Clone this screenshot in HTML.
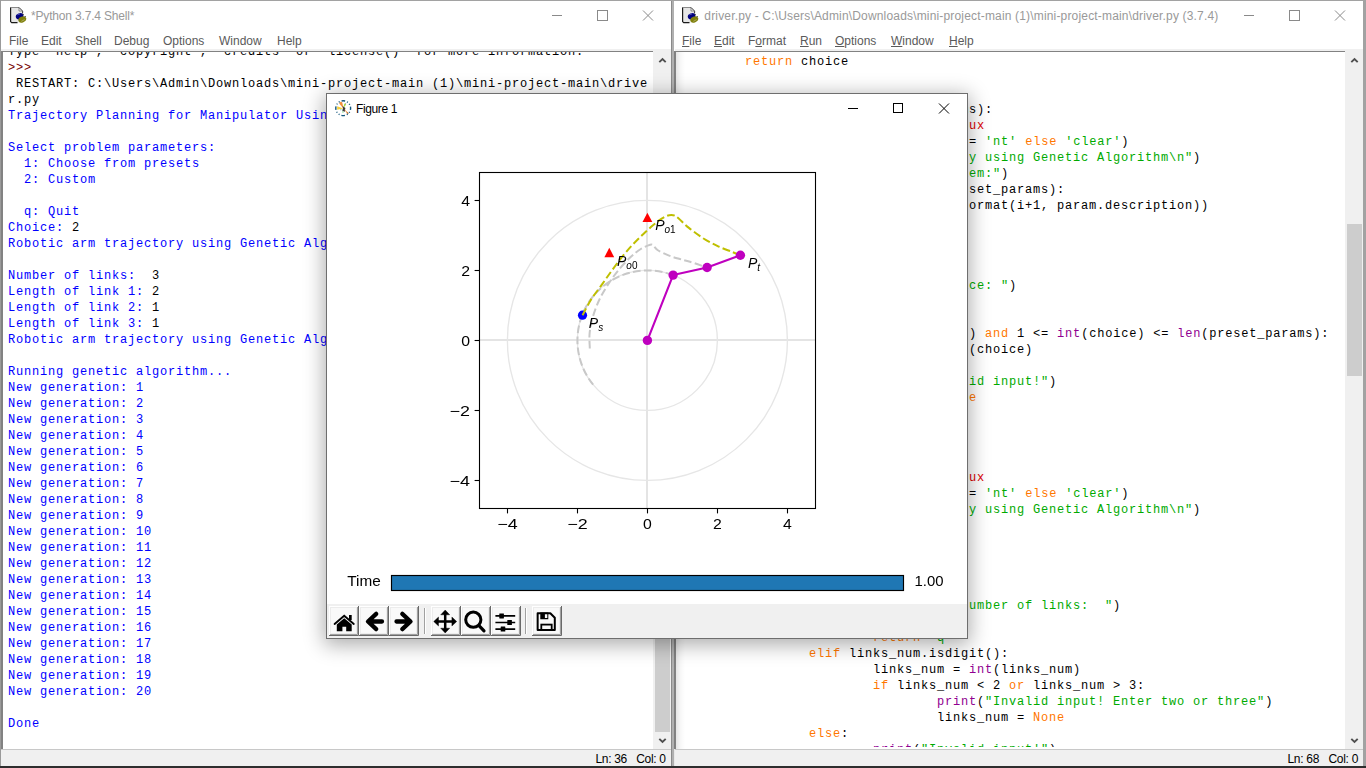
<!DOCTYPE html>
<html><head><meta charset="utf-8"><title>screen</title>
<style>
*{box-sizing:border-box;margin:0;padding:0}
html,body{width:1366px;height:768px;overflow:hidden;background:#b0b0b0;font-family:"Liberation Sans",sans-serif;}
.abs{position:absolute}
.win{position:absolute;background:#fff;overflow:hidden}
.title{position:absolute;left:0;top:0;right:0;height:30px;background:#fff}
.ttext{position:absolute;top:8px;font-size:12px;line-height:14px;color:#999;white-space:nowrap;transform-origin:0 0}
.menu{position:absolute;left:0;right:0;top:30px;height:20px;background:#fff;font-size:12px;line-height:14px;color:#5a5a5a}
.menu span{position:absolute;top:3px;white-space:nowrap}
.menu u{text-decoration:underline;text-underline-offset:1px}
.txt{position:absolute;background:#fff;overflow:hidden;font-family:"Liberation Mono",monospace;font-size:12px;letter-spacing:0.8px;line-height:16px}
.ln{height:16px;white-space:pre}
.sb{position:absolute;background:#f0f0f0}
.thumb{position:absolute;left:0;right:0;background:#cdcdcd}
.status{position:absolute;left:0;right:0;height:17px;background:#f0f0f0;font-size:12px;line-height:14px;color:#000}
.status span{position:absolute;top:2px;white-space:nowrap}
.ctl{position:absolute}
</style></head><body>
<!-- desktop strips -->
<div class="abs" style="left:0;top:0;width:1366px;height:1px;background:#a2a2a2"></div>
<div class="abs" style="left:0;top:0;width:1px;height:766px;background:#9a9a9a"></div>
<div class="abs" style="left:671px;top:1px;width:1px;height:765px;background:#8a8a8a"></div>
<div class="abs" style="left:674px;top:1px;width:1px;height:50px;background:#fff"></div>
<div class="abs" style="left:674px;top:51px;width:1px;height:698px;background:#808080"></div>
<div class="abs" style="left:674px;top:749px;width:1px;height:17px;background:#e8e8e8"></div>
<div class="abs" style="left:1363px;top:1px;width:3px;height:765px;background:#a2a2a2"></div>
<!-- bottom dark strip -->
<div class="abs" style="left:0;top:766px;width:1366px;height:2px;background:#2e2e2e"></div>

<!-- ================= LEFT WINDOW : Python Shell ================= -->
<div class="win" id="w1" style="left:1px;top:1px;width:670px;height:765px">
  <div class="title">
    <svg class="abs" style="left:9px;top:6px" width="17" height="17" viewBox="0 0 17 17"><path d="M0.5 0.5H9L12.5 4V15.5H1.5L0.5 14.5Z" fill="#e6e6e6"/>
<path d="M0.6 0.3V14.6L1.7 15.6H7.5" fill="none" stroke="#1a1a1a" stroke-width="1.2"/>
<path d="M0.5 0.5H9" fill="none" stroke="#8a8a8a" stroke-width="1"/>
<path d="M9 0.5L12.6 4.1V6.5" fill="none" stroke="#333" stroke-width="1"/>
<path d="M9 0.8V4H12.3Z" fill="#f6f6f6" stroke="#666" stroke-width="0.7"/>
<ellipse cx="9.6" cy="9.2" rx="3.9" ry="2.9" transform="rotate(-22 9.6 9.2)" fill="#00007f"/>
<path d="M7.2 7.9L10.2 6.9" stroke="#5a5ac0" stroke-width="0.8" fill="none"/>
<ellipse cx="12.3" cy="12.5" rx="4.1" ry="2.9" transform="rotate(-22 12.3 12.5)" fill="#80800a"/>
<circle cx="13.2" cy="7.6" r="0.6" fill="#222"/><circle cx="15.2" cy="9.6" r="0.6" fill="#222"/>
<path d="M11.2 14.4L14.6 12.6" stroke="#b0b070" stroke-width="0.8" fill="none"/></svg>
    <div class="ttext" id="t1" style="left:30px;letter-spacing:-0.17px">*Python 3.7.4 Shell*</div>
    <svg class="ctl" style="left:551px;top:9px" width="104" height="12" viewBox="0 0 104 12" fill="none" stroke="#8a8a8a" stroke-width="1">
      <path d="M0 5.5H10"/><rect x="45.5" y="0.5" width="10" height="10"/><path d="M91 0.5L101 10.5M101 0.5L91 10.5"/>
    </svg>
  </div>
  <div class="menu">
    <span style="left:8px">File</span><span style="left:40px">Edit</span><span style="left:74px">Shell</span><span style="left:113px">Debug</span><span style="left:162px">Options</span><span style="left:218px">Window</span><span style="left:276px">Help</span>
  </div>
  <div class="abs" style="left:0;top:48px;width:670px;height:3px;background:#f0f0f0"></div>
  <div class="abs" style="left:0;top:50px;width:653px;height:1px;background:#828282"></div>
  <div class="abs" style="left:0;top:50px;width:2px;height:698px;background:#828282"></div>
  <div class="txt" style="left:2px;top:51px;width:650px;height:697px"><div style="position:absolute;left:5px;top:-7.65px">
<div class="ln"><span style="color:#000">Type "help", "copyright", "credits" or "license()" for more information.</span></div>
<div class="ln"><span style="color:#770000">&gt;&gt;&gt; </span></div>
<div class="ln"><span style="color:#000"> RESTART: C:\Users\Admin\Downloads\mini-project-main (1)\mini-project-main\drive</span></div>
<div class="ln"><span style="color:#000">r.py</span></div>
<div class="ln"><span style="color:#0000ff">Trajectory Planning for Manipulator Using Genetic Algorithm</span></div>
<div class="ln">&nbsp;</div>
<div class="ln"><span style="color:#0000ff">Select problem parameters:</span></div>
<div class="ln"><span style="color:#0000ff">  1: Choose from presets</span></div>
<div class="ln"><span style="color:#0000ff">  2: Custom</span></div>
<div class="ln">&nbsp;</div>
<div class="ln"><span style="color:#0000ff">  q: Quit</span></div>
<div class="ln"><span style="color:#0000ff">Choice: </span><span style="color:#000">2</span></div>
<div class="ln"><span style="color:#0000ff">Robotic arm trajectory using Genetic Algorithm</span></div>
<div class="ln">&nbsp;</div>
<div class="ln"><span style="color:#0000ff">Number of links:  </span><span style="color:#000">3</span></div>
<div class="ln"><span style="color:#0000ff">Length of link 1: </span><span style="color:#000">2</span></div>
<div class="ln"><span style="color:#0000ff">Length of link 2: </span><span style="color:#000">1</span></div>
<div class="ln"><span style="color:#0000ff">Length of link 3: </span><span style="color:#000">1</span></div>
<div class="ln"><span style="color:#0000ff">Robotic arm trajectory using Genetic Algorithm</span></div>
<div class="ln">&nbsp;</div>
<div class="ln"><span style="color:#0000ff">Running genetic algorithm...</span></div>
<div class="ln"><span style="color:#0000ff">New generation: 1</span></div>
<div class="ln"><span style="color:#0000ff">New generation: 2</span></div>
<div class="ln"><span style="color:#0000ff">New generation: 3</span></div>
<div class="ln"><span style="color:#0000ff">New generation: 4</span></div>
<div class="ln"><span style="color:#0000ff">New generation: 5</span></div>
<div class="ln"><span style="color:#0000ff">New generation: 6</span></div>
<div class="ln"><span style="color:#0000ff">New generation: 7</span></div>
<div class="ln"><span style="color:#0000ff">New generation: 8</span></div>
<div class="ln"><span style="color:#0000ff">New generation: 9</span></div>
<div class="ln"><span style="color:#0000ff">New generation: 10</span></div>
<div class="ln"><span style="color:#0000ff">New generation: 11</span></div>
<div class="ln"><span style="color:#0000ff">New generation: 12</span></div>
<div class="ln"><span style="color:#0000ff">New generation: 13</span></div>
<div class="ln"><span style="color:#0000ff">New generation: 14</span></div>
<div class="ln"><span style="color:#0000ff">New generation: 15</span></div>
<div class="ln"><span style="color:#0000ff">New generation: 16</span></div>
<div class="ln"><span style="color:#0000ff">New generation: 17</span></div>
<div class="ln"><span style="color:#0000ff">New generation: 18</span></div>
<div class="ln"><span style="color:#0000ff">New generation: 19</span></div>
<div class="ln"><span style="color:#0000ff">New generation: 20</span></div>
<div class="ln">&nbsp;</div>
<div class="ln"><span style="color:#0000ff">Done</span></div>
  </div></div>
  <div class="sb" style="left:652px;top:48px;width:18px;height:700px">
    <svg class="abs" style="left:5px;top:8px" width="9" height="6" viewBox="0 0 9 6"><path d="M1.3 5.2L4.5 2L7.7 5.2" fill="none" stroke="#505050" stroke-width="1.9"/></svg>
    <div class="thumb" style="left:2px;right:1px;top:120px;height:563px"></div>
    <svg class="abs" style="left:5px;top:689px" width="9" height="6" viewBox="0 0 9 6"><path d="M1.3 0.8L4.5 4L7.7 0.8" fill="none" stroke="#505050" stroke-width="1.9"/></svg>
  </div>
  <div class="status" style="top:748px;border-top:1px solid #c8c8c8"><span style="left:594.4px;letter-spacing:-0.3px" id="s1">Ln: 36</span><span style="left:635.2px;letter-spacing:-0.3px" id="s1b">Col: 0</span></div>
</div>

<!-- ================= RIGHT WINDOW : driver.py ================= -->
<div class="win" id="w2" style="left:675px;top:1px;width:688px;height:765px">
  <div class="title">
    <svg class="abs" style="left:7px;top:6px" width="17" height="17" viewBox="0 0 17 17"><path d="M0.5 0.5H9L12.5 4V15.5H1.5L0.5 14.5Z" fill="#e6e6e6"/>
<path d="M0.6 0.3V14.6L1.7 15.6H7.5" fill="none" stroke="#1a1a1a" stroke-width="1.2"/>
<path d="M0.5 0.5H9" fill="none" stroke="#8a8a8a" stroke-width="1"/>
<path d="M9 0.5L12.6 4.1V6.5" fill="none" stroke="#333" stroke-width="1"/>
<path d="M9 0.8V4H12.3Z" fill="#f6f6f6" stroke="#666" stroke-width="0.7"/>
<ellipse cx="9.6" cy="9.2" rx="3.9" ry="2.9" transform="rotate(-22 9.6 9.2)" fill="#00007f"/>
<path d="M7.2 7.9L10.2 6.9" stroke="#5a5ac0" stroke-width="0.8" fill="none"/>
<ellipse cx="12.3" cy="12.5" rx="4.1" ry="2.9" transform="rotate(-22 12.3 12.5)" fill="#80800a"/>
<circle cx="13.2" cy="7.6" r="0.6" fill="#222"/><circle cx="15.2" cy="9.6" r="0.6" fill="#222"/>
<path d="M11.2 14.4L14.6 12.6" stroke="#b0b070" stroke-width="0.8" fill="none"/></svg>
    <div class="ttext" id="t2" style="left:29.3px;letter-spacing:0.17px">driver.py - C:\Users\Admin\Downloads\mini-project-main (1)\mini-project-main\driver.py (3.7.4)</div>
    <svg class="ctl" style="left:569px;top:9px" width="104" height="12" viewBox="0 0 104 12" fill="none" stroke="#8a8a8a" stroke-width="1">
      <path d="M0 5.5H10"/><rect x="45.5" y="0.5" width="10" height="10"/><path d="M91 0.5L101 10.5M101 0.5L91 10.5"/>
    </svg>
  </div>
  <div class="menu">
    <span style="left:7px"><u>F</u>ile</span><span style="left:39px"><u>E</u>dit</span><span style="left:73px">F<u>o</u>rmat</span><span style="left:125px"><u>R</u>un</span><span style="left:160px"><u>O</u>ptions</span><span style="left:216px"><u>W</u>indow</span><span style="left:274px"><u>H</u>elp</span>
  </div>
  <div class="abs" style="left:0;top:48px;width:688px;height:3px;background:#f0f0f0"></div>
  <div class="abs" style="left:0;top:50px;width:671px;height:1px;background:#828282"></div>
  <div class="abs" style="left:0;top:50px;width:1px;height:698px;background:#828282"></div>
  <div class="txt" style="left:1px;top:51px;width:669px;height:697px"><div style="position:absolute;left:5px;top:2.35px">
<div class="ln"><span style="color:#000">        </span><span style="color:#ff7700">return</span><span style="color:#000"> choice</span></div>
<div class="ln">&nbsp;</div>
<div class="ln">&nbsp;</div>
<div class="ln"><span style="color:#ff7700">def </span><span style="color:#0000ff">choose_from_presets</span><span style="color:#000">(preset_params):</span></div>
<div class="ln"><span style="color:#000">        </span><span style="color:#dd0000"># cls: windows, clear on linux</span></div>
<div class="ln"><span style="color:#000">        os.system(</span><span style="color:#00aa00">'cls'</span><span style="color:#000"> </span><span style="color:#ff7700">if</span><span style="color:#000"> os.name == </span><span style="color:#00aa00">'nt'</span><span style="color:#000"> </span><span style="color:#ff7700">else</span><span style="color:#000"> </span><span style="color:#00aa00">'clear'</span><span style="color:#000">)</span></div>
<div class="ln"><span style="color:#000">        </span><span style="color:#900090">print</span><span style="color:#000">(</span><span style="color:#00aa00">"Robotic arm trajectory using Genetic Algorithm\n"</span><span style="color:#000">)</span></div>
<div class="ln"><span style="color:#000">        </span><span style="color:#900090">print</span><span style="color:#000">(</span><span style="color:#00aa00">"Select a preset problem:"</span><span style="color:#000">)</span></div>
<div class="ln"><span style="color:#000">        </span><span style="color:#ff7700">for</span><span style="color:#000"> i,param </span><span style="color:#ff7700">in</span><span style="color:#000"> </span><span style="color:#900090">enumerate</span><span style="color:#000">(preset_params):</span></div>
<div class="ln"><span style="color:#000">                </span><span style="color:#900090">print</span><span style="color:#000">(</span><span style="color:#00aa00">"    {}: {}"</span><span style="color:#000">.format(i+1, param.description))</span></div>
<div class="ln">&nbsp;</div>
<div class="ln">&nbsp;</div>
<div class="ln">&nbsp;</div>
<div class="ln">&nbsp;</div>
<div class="ln"><span style="color:#000">        choice = </span><span style="color:#900090">input</span><span style="color:#000">(</span><span style="color:#00aa00">"Enter a choice: "</span><span style="color:#000">)</span></div>
<div class="ln">&nbsp;</div>
<div class="ln">&nbsp;</div>
<div class="ln"><span style="color:#000">        </span><span style="color:#ff7700">if</span><span style="color:#000"> choice.strip().isnumeric() </span><span style="color:#ff7700">and</span><span style="color:#000"> 1 &lt;= </span><span style="color:#900090">int</span><span style="color:#000">(choice) &lt;= </span><span style="color:#900090">len</span><span style="color:#000">(preset_params):</span></div>
<div class="ln"><span style="color:#000">                        choice = </span><span style="color:#900090">int</span><span style="color:#000">(choice)</span></div>
<div class="ln">&nbsp;</div>
<div class="ln"><span style="color:#000">                        </span><span style="color:#900090">print</span><span style="color:#000">(</span><span style="color:#00aa00">"Invalid input!"</span><span style="color:#000">)</span></div>
<div class="ln"><span style="color:#000">                        choice = </span><span style="color:#ff7700">None</span></div>
<div class="ln">&nbsp;</div>
<div class="ln">&nbsp;</div>
<div class="ln">&nbsp;</div>
<div class="ln">&nbsp;</div>
<div class="ln"><span style="color:#000">        </span><span style="color:#dd0000"># cls: windows, clear on linux</span></div>
<div class="ln"><span style="color:#000">        os.system(</span><span style="color:#00aa00">'cls'</span><span style="color:#000"> </span><span style="color:#ff7700">if</span><span style="color:#000"> os.name == </span><span style="color:#00aa00">'nt'</span><span style="color:#000"> </span><span style="color:#ff7700">else</span><span style="color:#000"> </span><span style="color:#00aa00">'clear'</span><span style="color:#000">)</span></div>
<div class="ln"><span style="color:#000">        </span><span style="color:#900090">print</span><span style="color:#000">(</span><span style="color:#00aa00">"Robotic arm trajectory using Genetic Algorithm\n"</span><span style="color:#000">)</span></div>
<div class="ln">&nbsp;</div>
<div class="ln">&nbsp;</div>
<div class="ln">&nbsp;</div>
<div class="ln">&nbsp;</div>
<div class="ln">&nbsp;</div>
<div class="ln"><span style="color:#000">                links_num = </span><span style="color:#900090">input</span><span style="color:#000">(</span><span style="color:#00aa00">"Number of links:  "</span><span style="color:#000">)</span></div>
<div class="ln">&nbsp;</div>
<div class="ln"><span style="color:#000">                        </span><span style="color:#ff7700">return</span><span style="color:#000"> </span><span style="color:#00aa00">'q'</span></div>
<div class="ln"><span style="color:#000">                </span><span style="color:#ff7700">elif</span><span style="color:#000"> links_num.isdigit():</span></div>
<div class="ln"><span style="color:#000">                        links_num = </span><span style="color:#900090">int</span><span style="color:#000">(links_num)</span></div>
<div class="ln"><span style="color:#000">                        </span><span style="color:#ff7700">if</span><span style="color:#000"> links_num &lt; 2 </span><span style="color:#ff7700">or</span><span style="color:#000"> links_num &gt; 3:</span></div>
<div class="ln"><span style="color:#000">                                </span><span style="color:#900090">print</span><span style="color:#000">(</span><span style="color:#00aa00">"Invalid input! Enter two or three"</span><span style="color:#000">)</span></div>
<div class="ln"><span style="color:#000">                                links_num = </span><span style="color:#ff7700">None</span></div>
<div class="ln"><span style="color:#000">                </span><span style="color:#ff7700">else</span><span style="color:#000">:</span></div>
<div class="ln"><span style="color:#000">                        </span><span style="color:#900090">print</span><span style="color:#000">(</span><span style="color:#00aa00">"Invalid input!"</span><span style="color:#000">)</span></div>
  </div></div>
  <div class="abs" style="left:1px;top:746.4px;width:669px;height:1.6px;background:#fff"></div>
  <div class="abs" style="left:1px;top:51px;width:9px;height:697px;background:linear-gradient(to right,rgba(0,0,0,0.10),rgba(0,0,0,0.03) 50%,rgba(0,0,0,0))"></div>
  <div class="sb" style="left:670px;top:48px;width:18px;height:700px">
    <svg class="abs" style="left:5.3px;top:8px" width="9" height="6" viewBox="0 0 9 6"><path d="M1.3 5.2L4.5 2L7.7 5.2" fill="none" stroke="#505050" stroke-width="1.9"/></svg>
    <div class="thumb" style="left:2px;right:1px;top:175px;height:152px"></div>
    <svg class="abs" style="left:5.3px;top:689px" width="9" height="6" viewBox="0 0 9 6"><path d="M1.3 0.8L4.5 4L7.7 0.8" fill="none" stroke="#505050" stroke-width="1.9"/></svg>
  </div>
  <div class="status" style="top:748px;border-top:1px solid #c8c8c8"><span style="left:612.5px;letter-spacing:-0.3px" id="s2">Ln: 68</span><span style="left:653.5px;letter-spacing:-0.3px" id="s2b">Col: 0</span></div>
</div>

<!-- ================= FIGURE WINDOW ================= -->
<div class="abs" id="fig" style="left:326px;top:93px;width:642px;height:546px;background:#fff;border:1px solid #6e6e6e;box-shadow:0 4px 19px 2px rgba(0,0,0,0.32)">
  <svg class="abs" style="left:8px;top:6px" width="18" height="18" viewBox="0 0 18 18"><circle cx="8.2" cy="8.2" r="7.4" fill="none" stroke="#11557c" stroke-width="1.4" stroke-dasharray="3.6 2.0 1.0 2.0 1.0 2.0" stroke-dashoffset="1.8"/>
<path d="M8.4 8.4L4.2 3.4L5.6 1.8L7.2 2.2Z" fill="#f28e3c"/>
<path d="M8.2 8.4L2.2 6.2L2.2 9.8Z" fill="#f7d038"/>
<path d="M8.2 8.2L9.4 3.6L11.2 4.4Z" fill="#a6d83a"/>
<path d="M10 3.2L11.2 3.6L10.6 4.6Z" fill="#666"/>
<path d="M7.6 6L10.4 8L9.6 12L7.2 10.6L8 8.6Z" fill="#3c3c3c"/>
<path d="M9.2 9L13.6 13.2L12.2 14Z" fill="#f28e3c"/>
<path d="M12.4 12.2L13.6 13.2L12.6 13.8Z" fill="#333"/>
<path d="M7.2 11L8.8 12.4L7.4 12.6Z" fill="#4cd964"/>
<path d="M5.2 9.4L6.6 9.2L5.8 10.4Z" fill="#2aa198"/></svg>
  <div class="abs" id="t3" style="left:29px;top:8px;letter-spacing:-0.38px;font-size:12px;line-height:14px;color:#000;white-space:nowrap;transform-origin:0 0">Figure 1</div>
  <svg class="ctl" style="left:521px;top:9px" width="104" height="12" viewBox="0 0 104 12" fill="none" stroke="#000" stroke-width="1">
    <path d="M0 5.5H10"/><rect x="45.5" y="0.5" width="9" height="9"/><path d="M91 0.5L101 10.5M101 0.5L91 10.5"/>
  </svg>
  <!-- canvas 640x480 -->
  <svg class="abs" style="left:0;top:30px;will-change:transform" width="640" height="480" viewBox="0 0 640 480" font-family="Liberation Sans, sans-serif">
<rect x="0" y="0" width="640" height="480" fill="#fff"/>
<g fill="none" stroke="#e4e4e4">
<line x1="152.5" y1="216" x2="488.5" y2="216" stroke-width="2"/>
<line x1="320" y1="48.5" x2="320" y2="384.5" stroke-width="2"/>
<circle cx="320.4" cy="216.4" r="70" stroke="#e6e6e6" stroke-width="1.35"/>
<circle cx="320.4" cy="216.4" r="140" stroke="#e6e6e6" stroke-width="1.35"/>
</g>
<path d="M262.8 224.5 C262.8 222.0 262.1 214.8 262.6 209.5 C263.1 204.2 264.3 198.3 265.9 192.7 C267.5 187.1 269.8 181.2 272.2 176.0 C274.6 170.8 277.4 166.3 280.5 161.4 C283.6 156.5 287.1 151.5 290.9 146.8 C294.7 142.1 299.6 136.9 303.4 133.3 C307.2 129.7 310.5 127.1 313.8 125.0 C317.1 122.9 321.1 121.4 323.2 120.8 C325.3 120.2 325.3 120.7 326.5 121.6 C327.7 122.5 328.1 124.4 330.5 126.0 C332.9 127.6 337.3 129.7 340.9 131.2 C344.5 132.7 348.3 133.7 352.0 134.8 C355.7 135.9 358.3 136.4 363.0 137.8 C367.7 139.2 377.2 142.6 380.1 143.5" fill="none" stroke="#c8c8c8" stroke-width="2" stroke-dasharray="7.7 3.3"/>
<path d="M346.0 151.3 A70 70 0 0 0 266.1 260.6" fill="none" stroke="#c8c8c8" stroke-width="2" stroke-dasharray="7.7 3.3"/>
<circle cx="255.5" cy="191.2" r="4.6" fill="#0000ff"/>
<path d="M255.5 191.2 C256.9 188.7 260.7 181.0 263.8 176.0 C266.9 171.0 270.8 166.3 274.3 161.4 C277.8 156.5 281.2 151.6 284.7 146.8 C288.2 142.0 291.6 137.1 295.1 132.8 C298.6 128.5 302.0 124.5 305.5 120.8 C309.0 117.1 312.4 113.7 315.9 110.4 C319.4 107.1 323.2 103.6 326.3 101.0 C329.4 98.4 332.4 96.1 334.7 94.6 C337.0 93.1 338.4 92.4 340.0 91.8 C341.6 91.2 343.0 91.0 344.3 91.0 C345.6 91.0 346.8 91.2 348.0 91.8 C349.2 92.4 349.4 92.4 351.7 94.4 C354.0 96.4 357.8 100.6 361.9 103.9 C366.0 107.2 371.6 111.4 376.5 114.5 C381.4 117.6 386.3 120.1 391.2 122.4 C396.1 124.7 402.1 126.7 405.8 128.2 C409.5 129.7 412.1 130.7 413.4 131.2" fill="none" stroke="#bfbf00" stroke-width="2" stroke-dasharray="7.7 3.3"/>
<polyline points="320.4,216.4 346.1,151.1 380.1,143.5 413.4,131.2" fill="none" stroke="#bf00bf" stroke-width="2.1" stroke-linejoin="round"/>
<circle cx="320.4" cy="216.4" r="4.7" fill="#bf00bf"/>
<circle cx="346.1" cy="151.1" r="4.7" fill="#bf00bf"/>
<circle cx="380.1" cy="143.5" r="4.7" fill="#bf00bf"/>
<circle cx="413.4" cy="131.2" r="4.7" fill="#bf00bf"/>
<path d="M320.4 88.7 L325.3 98.1 L315.5 98.1 Z" fill="#ff0000"/>
<path d="M282.3 123.8 L287.2 133.2 L277.4 133.2 Z" fill="#ff0000"/>
<rect x="152.5" y="48.5" width="336" height="336" fill="none" stroke="#000" stroke-width="1.1"/>
<g stroke="#000" stroke-width="1.1">
<line x1="180.5" y1="384.5" x2="180.5" y2="389.4"/>
<line x1="147.6" y1="356.5" x2="152.5" y2="356.5"/>
<line x1="250.5" y1="384.5" x2="250.5" y2="389.4"/>
<line x1="147.6" y1="286.5" x2="152.5" y2="286.5"/>
<line x1="320.5" y1="384.5" x2="320.5" y2="389.4"/>
<line x1="147.6" y1="216.5" x2="152.5" y2="216.5"/>
<line x1="390.5" y1="384.5" x2="390.5" y2="389.4"/>
<line x1="147.6" y1="146.5" x2="152.5" y2="146.5"/>
<line x1="460.5" y1="384.5" x2="460.5" y2="389.4"/>
<line x1="147.6" y1="76.5" x2="152.5" y2="76.5"/>
</g>
<g font-size="14px" fill="#000">
<text x="180.5" y="405.3" text-anchor="middle" textLength="20.4" lengthAdjust="spacingAndGlyphs">−4</text>
<text x="143" y="361.9" text-anchor="end" textLength="20.4" lengthAdjust="spacingAndGlyphs">−4</text>
<text x="250.5" y="405.3" text-anchor="middle" textLength="20.4" lengthAdjust="spacingAndGlyphs">−2</text>
<text x="143" y="291.9" text-anchor="end" textLength="20.4" lengthAdjust="spacingAndGlyphs">−2</text>
<text x="320.5" y="405.3" text-anchor="middle" textLength="8.8" lengthAdjust="spacingAndGlyphs">0</text>
<text x="143" y="221.9" text-anchor="end" textLength="8.8" lengthAdjust="spacingAndGlyphs">0</text>
<text x="390.5" y="405.3" text-anchor="middle" textLength="8.8" lengthAdjust="spacingAndGlyphs">2</text>
<text x="143" y="151.9" text-anchor="end" textLength="8.8" lengthAdjust="spacingAndGlyphs">2</text>
<text x="460.5" y="405.3" text-anchor="middle" textLength="8.8" lengthAdjust="spacingAndGlyphs">4</text>
<text x="143" y="81.9" text-anchor="end" textLength="8.8" lengthAdjust="spacingAndGlyphs">4</text>
</g>
<text x="328.2" y="106.2" font-size="14px" font-style="italic">P<tspan font-size="10px" dy="3" >o<tspan font-style="normal">1</tspan></tspan></text>
<text x="290.0" y="142.0" font-size="14px" font-style="italic">P<tspan font-size="10px" dy="3" >o<tspan font-style="normal">0</tspan></tspan></text>
<text x="261.8" y="204.2" font-size="14px" font-style="italic">P<tspan font-size="10px" dy="3" >s</tspan></text>
<text x="421.0" y="144.4" font-size="14px" font-style="italic">P<tspan font-size="10px" dy="3" >t</tspan></text>
<rect x="64.5" y="451.5" width="512" height="15" fill="#1f77b4" stroke="#000" stroke-width="1.15"/>
<text x="53.8" y="461.7" font-size="14px" text-anchor="end" textLength="33.5" lengthAdjust="spacingAndGlyphs">Time</text>
<text x="587.5" y="461.7" font-size="14px" textLength="29" lengthAdjust="spacingAndGlyphs">1.00</text>
  </svg>
  <!-- toolbar -->
  <div class="abs" style="left:0;top:510px;width:640px;height:34px;background:#f0f0f0">
<svg class="abs" style="left:0;top:0" width="640" height="34" viewBox="327 604 640 34">
<rect x="329" y="606" width="30" height="30" fill="#f9f9f9"/>
<rect x="330.5" y="607.5" width="26" height="26" fill="none" stroke="#ececec" stroke-width="1"/>
<path d="M329.5 606V635" stroke="#fff" stroke-width="1" fill="none"/>
<path d="M329.0 606.5H358.0" stroke="#fff" stroke-width="1" fill="none"/>
<path d="M357.5 607.0V634.5H330.0" stroke="#a0a0a0" stroke-width="1" fill="none"/>
<path d="M358.5 606.0V635.5H329.0" stroke="#696969" stroke-width="1" fill="none"/>
<rect x="359" y="606" width="30" height="30" fill="#f9f9f9"/>
<rect x="360.5" y="607.5" width="26" height="26" fill="none" stroke="#ececec" stroke-width="1"/>
<path d="M359.5 606V635" stroke="#fff" stroke-width="1" fill="none"/>
<path d="M359.0 606.5H388.0" stroke="#fff" stroke-width="1" fill="none"/>
<path d="M387.5 607.0V634.5H360.0" stroke="#a0a0a0" stroke-width="1" fill="none"/>
<path d="M388.5 606.0V635.5H359.0" stroke="#696969" stroke-width="1" fill="none"/>
<rect x="389" y="606" width="30" height="30" fill="#f9f9f9"/>
<rect x="390.5" y="607.5" width="26" height="26" fill="none" stroke="#ececec" stroke-width="1"/>
<path d="M389.5 606V635" stroke="#fff" stroke-width="1" fill="none"/>
<path d="M389.0 606.5H418.0" stroke="#fff" stroke-width="1" fill="none"/>
<path d="M417.5 607.0V634.5H390.0" stroke="#a0a0a0" stroke-width="1" fill="none"/>
<path d="M418.5 606.0V635.5H389.0" stroke="#696969" stroke-width="1" fill="none"/>
<rect x="431" y="606" width="30" height="30" fill="#f9f9f9"/>
<rect x="432.5" y="607.5" width="26" height="26" fill="none" stroke="#ececec" stroke-width="1"/>
<path d="M431.5 606V635" stroke="#fff" stroke-width="1" fill="none"/>
<path d="M431.0 606.5H460.0" stroke="#fff" stroke-width="1" fill="none"/>
<path d="M459.5 607.0V634.5H432.0" stroke="#a0a0a0" stroke-width="1" fill="none"/>
<path d="M460.5 606.0V635.5H431.0" stroke="#696969" stroke-width="1" fill="none"/>
<rect x="461" y="606" width="30" height="30" fill="#f9f9f9"/>
<rect x="462.5" y="607.5" width="26" height="26" fill="none" stroke="#ececec" stroke-width="1"/>
<path d="M461.5 606V635" stroke="#fff" stroke-width="1" fill="none"/>
<path d="M461.0 606.5H490.0" stroke="#fff" stroke-width="1" fill="none"/>
<path d="M489.5 607.0V634.5H462.0" stroke="#a0a0a0" stroke-width="1" fill="none"/>
<path d="M490.5 606.0V635.5H461.0" stroke="#696969" stroke-width="1" fill="none"/>
<rect x="491" y="606" width="30" height="30" fill="#f9f9f9"/>
<rect x="492.5" y="607.5" width="26" height="26" fill="none" stroke="#ececec" stroke-width="1"/>
<path d="M491.5 606V635" stroke="#fff" stroke-width="1" fill="none"/>
<path d="M491.0 606.5H520.0" stroke="#fff" stroke-width="1" fill="none"/>
<path d="M519.5 607.0V634.5H492.0" stroke="#a0a0a0" stroke-width="1" fill="none"/>
<path d="M520.5 606.0V635.5H491.0" stroke="#696969" stroke-width="1" fill="none"/>
<rect x="532" y="606" width="30" height="30" fill="#f9f9f9"/>
<rect x="533.5" y="607.5" width="26" height="26" fill="none" stroke="#ececec" stroke-width="1"/>
<path d="M532.5 606V635" stroke="#fff" stroke-width="1" fill="none"/>
<path d="M532.0 606.5H561.0" stroke="#fff" stroke-width="1" fill="none"/>
<path d="M560.5 607.0V634.5H533.0" stroke="#a0a0a0" stroke-width="1" fill="none"/>
<path d="M561.5 606.0V635.5H532.0" stroke="#696969" stroke-width="1" fill="none"/>
<path d="M424.5 608V634" stroke="#a0a0a0" stroke-width="1"/>
<path d="M425.5 608V634" stroke="#fff" stroke-width="1"/>
<path d="M525.5 608V634" stroke="#a0a0a0" stroke-width="1"/>
<path d="M526.5 608V634" stroke="#fff" stroke-width="1"/>
<g fill="#000" stroke="none">
<path d="M344.2 618.3 L351.7 624.6 V631.3 H346.2 V626.8 H342.4 V631.3 H336.8 V624.6 Z"/>
<rect x="349" y="615" width="2.7" height="5"/>
</g>
<path d="M334.6 624 L344.2 615.8 L353.8 624" fill="none" stroke="#000" stroke-width="1.9" stroke-linecap="round" stroke-linejoin="miter"/>
<path d="M371 621.5H382M376.2 613.9 L368 621.5 L376.2 629.1" fill="none" stroke="#000" stroke-width="4.3" stroke-linecap="round" stroke-linejoin="round"/>
<path d="M396.5 621.5H407.5M402.3 613.9 L410.5 621.5 L402.3 629.1" fill="none" stroke="#000" stroke-width="4.3" stroke-linecap="round" stroke-linejoin="round"/>
<path d="M445.2 613.5V629.5M437.2 621.5H453.2" stroke="#000" stroke-width="2.5" fill="none"/>
<path d="M445.2 610.0 l4.5 4.8 h-9 Z M445.2 633.0 l4.5 -4.8 h-9 Z M433.7 621.5 l4.8 -4.5 v9 Z M456.7 621.5 l-4.8 -4.5 v9 Z" fill="#000" stroke="#000" stroke-width="0.4" stroke-linejoin="round"/>
<circle cx="473.3" cy="619.7" r="7.6" fill="none" stroke="#000" stroke-width="3"/>
<path d="M479.2 625.8 L484 630.8" stroke="#000" stroke-width="3.2" stroke-linecap="round"/>
<path d="M495.4 615.9H515.2M495.4 622.5H515.2M495.4 629.1H515.2" stroke="#000" stroke-width="1.7"/>
<rect x="499.3" y="613.4" width="4.6" height="5" rx="0.3" fill="#000"/>
<rect x="507.3" y="620" width="4.6" height="5" rx="0.3" fill="#000"/>
<rect x="500.7" y="626.6" width="4.6" height="5" rx="0.3" fill="#000"/>
<path d="M537.65 613.3 H550.3 L554.8 617.8 V630 H537.65 Z" fill="none" stroke="#000" stroke-width="2.0" stroke-linejoin="round"/>
<path d="M540.3 612.4 H548.3 V619.2 H540.3 Z M544.9 614 V618 H547.3 V614 Z" fill="#000" fill-rule="evenodd"/>
<rect x="541.3" y="624.6" width="10.4" height="5.4" fill="none" stroke="#000" stroke-width="1.8"/>
</svg>
  </div>
</div>
</body></html>
